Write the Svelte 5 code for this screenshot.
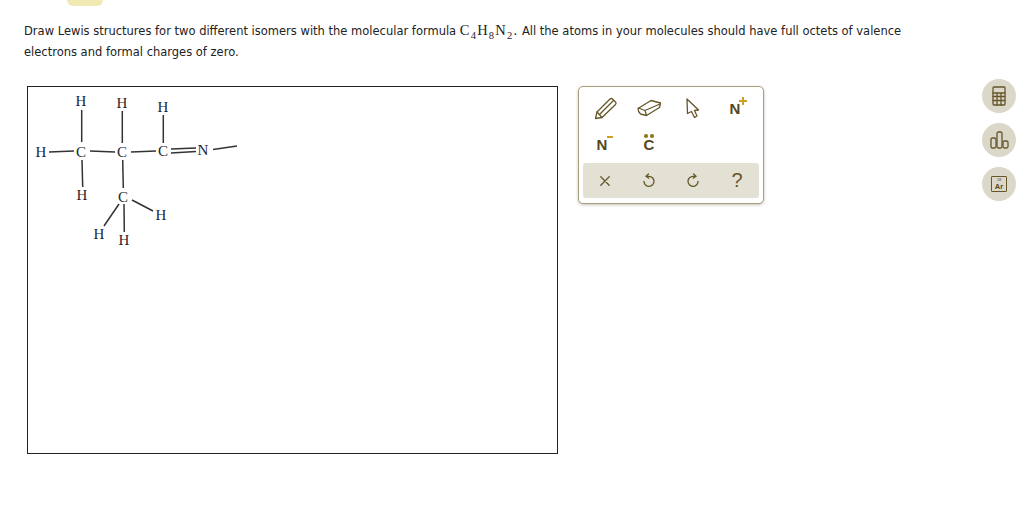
<script lang="ts">
	const atoms = [
		{ t: 'H', x: 81, y: 101 },
		{ t: 'H', x: 122, y: 103 },
		{ t: 'H', x: 163, y: 107 },
		{ t: 'H', x: 41, y: 152 },
		{ t: 'C', x: 81, y: 152 },
		{ t: 'C', x: 122, y: 152 },
		{ t: 'C', x: 163, y: 151 },
		{ t: 'N', x: 203, y: 150 },
		{ t: 'H', x: 82, y: 195 },
		{ t: 'C', x: 123, y: 197 },
		{ t: 'H', x: 161, y: 215 },
		{ t: 'H', x: 99, y: 234 },
		{ t: 'H', x: 124, y: 240 }
	];

	const bonds = [
		[81.7, 110, 81.7, 142],
		[122.3, 111, 122.3, 143],
		[163.3, 115, 163.3, 143],
		[49, 152, 74, 151],
		[90, 151, 115, 152],
		[131, 152, 156, 151],
		[171, 149, 196, 148],
		[171, 153, 196, 151.5],
		[213, 149.5, 237, 146],
		[82, 160, 82.7, 187],
		[122.7, 160, 123.3, 188],
		[132, 200, 153, 211],
		[119, 204, 104, 226],
		[124, 204, 124.3, 232]
	];
</script>

<div class="page">
	<div class="tab"></div>

	<p class="question">
		Draw Lewis structures for two different isomers with the molecular formula
		<span class="formula">C<sub>4</sub>H<sub>8</sub>N<sub>2</sub>.</span>
		All the atoms in your molecules should have full octets of valence electrons and formal charges of zero.
	</p>

	<div class="workspace">
		<div class="canvas">
			<svg class="molecule" width="529" height="366" viewBox="28 87 529 366">
				{#each bonds as [x1, y1, x2, y2]}
					<line {x1} {y1} {x2} {y2} />
				{/each}
				{#each atoms as a}
					<text x={a.x} y={a.y + 5}>{a.t}</text>
				{/each}
			</svg>
		</div>

		<div class="toolbar">
			<div class="tools">
				<button type="button" class="tool" aria-label="Pencil">
					<svg width="23" height="23" viewBox="0 0 23 23"><path d="M1.5 21.5L3 15 16 2q1.500-1 2.500 0l3 3q1 1 0 2.500L8 20.500z"/><path d="M3 15l5 5.500M5.500 17.500L19.500 3.500"/></svg>
				</button>
				<button type="button" class="tool" aria-label="Eraser">
					<svg width="25" height="18" viewBox="0 0 25 18"><path d="M1 9.500L14 1.500l9.500 2.500-1 4.500L9.500 16.500l-6-1.500Q1 13 1 9.500z"/><path d="M1.500 9l6.500 2.500 1.500 5M8 11.500L23 5"/></svg>
				</button>
				<button type="button" class="tool" aria-label="Select">
					<svg width="14" height="21" viewBox="0 0 14 21"><path d="M1 1l11.500 11-4 .5 2.500 5.500-2.500 1.500-3-6-4 2z"/></svg>
				</button>
				<button type="button" class="tool atom shift-n">N<span class="plus"></span></button>
				<button type="button" class="tool atom shift-m">N<span class="minus"></span></button>
				<button type="button" class="tool atom">C<span class="dots"></span></button>
			</div>
			<div class="actions">
				<button type="button" class="tool" aria-label="Clear">
					<svg width="10" height="10" viewBox="0 0 10 10"><path d="M.8.8l8.400 8.400M9.200.8L.8 9.200"/></svg>
				</button>
				<button type="button" class="tool" aria-label="Undo">
					<svg width="12" height="15" viewBox="0 0 12 15"><path d="M5.500 1L3 3.200l2.800 2"/><path d="M3.200 3.300h2.800a5 5 0 1 1-5 5.200"/></svg>
				</button>
				<button type="button" class="tool" aria-label="Redo">
					<svg width="12" height="15" viewBox="0 0 12 15"><path d="M6.500 1L9 3.200l-2.800 2"/><path d="M8.800 3.300H6a5 5 0 1 0 5 5.200"/></svg>
				</button>
				<button type="button" class="tool help">?</button>
			</div>
		</div>

		<div class="side">
			<button type="button" class="round" aria-label="Calculator">
				<svg width="14" height="20" viewBox="0 0 14 20"><rect x="1" y="1" width="12" height="18" rx="1"/><path d="M1 7h12M1 10.500h12M1 14.500h12M5 7v12M9 7v12"/></svg>
			</button>
			<button type="button" class="round" aria-label="Chart">
				<svg width="19" height="18" viewBox="0 0 19 18"><rect x="1" y="7" width="5" height="10" rx="1.500"/><rect x="7" y="1" width="5" height="16" rx="1.500"/><rect x="13" y="10" width="5" height="7" rx="1.500"/></svg>
			</button>
			<button type="button" class="round" aria-label="Periodic table">
				<span class="element"><span class="num">18</span>Ar</span>
			</button>
		</div>
	</div>
</div>

<style>
	:global(body) {
		margin: 0;
		background: #fff;
	}

	.page {
		width: 1024px;
		height: 520px;
		overflow: hidden;
		font-family: "DejaVu Sans", Verdana, sans-serif;
		color: #222;
	}

	.tab {
		width: 36px;
		height: 6px;
		margin-left: 67px;
		background: #f1e9b4;
		border-radius: 0 0 6px 6px;
	}

	.question {
		width: 890px;
		margin: 14px 0 0 24px;
		font-size: 11.5px;
		line-height: 21px;
	}

	.formula {
		font-family: "Liberation Serif", "Times New Roman", serif;
		font-size: 14.5px;
		letter-spacing: 1.2px;
	}

	sub {
		font-size: 10.5px;
		line-height: 0;
	}

	.workspace {
		display: flex;
		align-items: flex-start;
		margin-top: 23px;
		padding: 0 8px 0 27px;
	}

	.canvas {
		width: 529px;
		height: 366px;
		border: 1px solid #222;
		flex-shrink: 0;
	}

	.molecule {
		display: block;
	}

	.molecule line {
		stroke: #333;
		stroke-width: 1.5;
	}

	.molecule text {
		font-family: "Liberation Serif", "Times New Roman", serif;
		font-size: 15px;
		fill: #1d2730;
		text-anchor: middle;
	}

	.toolbar {
		width: 176px;
		margin-left: 20px;
		padding: 3px 4px 5px;
		border: 1px solid #a89f7c;
		border-radius: 5px;
		background: #fff;
		box-shadow: 0 1px 3px rgba(90, 80, 50, 0.35);
		flex-shrink: 0;
	}

	.tools,
	.actions {
		display: grid;
		grid-template-columns: repeat(4, 44px);
	}

	.tools {
		grid-auto-rows: 36px;
		margin-bottom: 1px;
	}

	.actions {
		height: 35px;
		background: #e3e0d4;
		border-radius: 3px;
	}

	.tool {
		display: grid;
		place-items: center;
		position: relative;
		padding: 0;
		border: 0;
		background: none;
		color: #54461c;
		font-family: "Liberation Sans", Arial, sans-serif;
	}

	.tool svg,
	.round svg {
		fill: none;
		stroke: #66562a;
		stroke-width: 1.3;
		stroke-linecap: round;
		stroke-linejoin: round;
	}

	.atom {
		padding-top: 1px;
		font-size: 15px;
		font-weight: 700;
	}

	.shift-n {
		padding-right: 4px;
	}

	.shift-m {
		padding-right: 6px;
	}

	.plus,
	.plus::after {
		position: absolute;
		background: #c9a227;
	}

	.plus {
		top: 10px;
		left: 24px;
		width: 8px;
		height: 2px;
	}

	.plus::after {
		content: "";
		top: -3px;
		left: 3px;
		width: 2px;
		height: 8px;
	}

	.minus {
		position: absolute;
		top: 10px;
		left: 24px;
		width: 6px;
		height: 1.5px;
		background: #c9a227;
	}

	.dots {
		position: absolute;
		top: 8px;
		left: 17px;
		width: 3.5px;
		height: 3.5px;
		border-radius: 50%;
		background: #8f7a26;
		box-shadow: 6px 0 0 #8f7a26;
	}

	.help {
		font-size: 20px;
		font-weight: 400;
		color: #66562a;
	}

	.side {
		display: flex;
		flex-direction: column;
		gap: 10px;
		margin: -7px 0 0 auto;
	}

	.round {
		display: grid;
		place-items: center;
		width: 34px;
		height: 34px;
		padding: 0;
		border: 0;
		border-radius: 50%;
		background: #dbd8c9;
	}

	.element {
		position: relative;
		box-sizing: border-box;
		width: 16px;
		height: 16px;
		padding-top: 6px;
		border: 1.2px solid #66562a;
		border-radius: 1px;
		color: #54461c;
		font-family: "Liberation Sans", Arial, sans-serif;
		font-size: 7.5px;
		font-weight: 700;
		line-height: 8px;
		text-align: center;
	}

	.num {
		position: absolute;
		top: 0;
		left: 0;
		right: 0;
		font-size: 4px;
		line-height: 6px;
		font-weight: 400;
	}
</style>
